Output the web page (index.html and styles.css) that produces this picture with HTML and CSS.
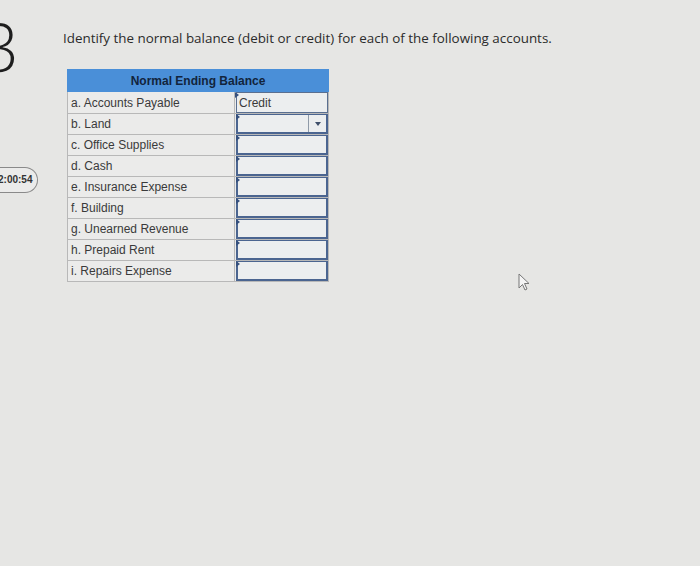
FILE: index.html
```html
<!DOCTYPE html>
<html>
<head>
<meta charset="utf-8">
<link rel="stylesheet" href="styles.css">
</head>
<body>
<div class="page">
  <aside class="side">
    <div class="qnum">3</div>
    <div class="timer">2:00:54</div>
  </aside>
  <main class="main">
    <p class="prompt">Identify the normal balance (debit or credit) for each of the following accounts.</p>
    <table class="grid">
      <thead>
        <tr><th colspan="2">Normal Ending Balance</th></tr>
      </thead>
      <tbody>
        <tr><td class="acct">a. Accounts Payable</td><td class="ans"><div class="box filled">Credit</div></td></tr>
        <tr><td class="acct">b. Land</td><td class="ans"><div class="box select"><span class="sel-val"></span><span class="arrow"></span></div></td></tr>
        <tr><td class="acct">c. Office Supplies</td><td class="ans"><div class="box"></div></td></tr>
        <tr><td class="acct">d. Cash</td><td class="ans"><div class="box"></div></td></tr>
        <tr><td class="acct">e. Insurance Expense</td><td class="ans"><div class="box"></div></td></tr>
        <tr><td class="acct">f. Building</td><td class="ans"><div class="box"></div></td></tr>
        <tr><td class="acct">g. Unearned Revenue</td><td class="ans"><div class="box"></div></td></tr>
        <tr><td class="acct">h. Prepaid Rent</td><td class="ans"><div class="box"></div></td></tr>
        <tr><td class="acct">i. Repairs Expense</td><td class="ans"><div class="box"></div></td></tr>
      </tbody>
    </table>
  </main>
  <svg class="cursor" width="14" height="20" viewBox="0 0 14 20"><path d="M1 1 L1 15 L4.5 11.5 L7 17 L9 16 L6.5 10.5 L11 10.5 Z" fill="#f4f4f4" stroke="#777" stroke-width="1"/></svg>
</div>
</body>
</html>
```

FILE: styles.css
```css
html, body {
  margin: 0;
  padding: 0;
}
body {
  background: #e6e6e4;
  width: 700px;
  height: 566px;
  overflow: hidden;
  font-family: "Liberation Sans", Arial, sans-serif;
  color: #333;
}
.page {
  position: relative;
  display: flex;
  height: 566px;
}
.side {
  width: 63px;
  flex: none;
  display: flex;
  flex-direction: column;
  align-items: flex-start;
}
.qnum {
  font-family: "Open Sans", sans-serif;
  font-size: 66px;
  line-height: 66px;
  color: #1e1e1e;
  margin-top: 13px;
  margin-left: -19px;
  font-weight: 300;
}
.timer {
  margin-top: 88px;
  margin-left: -12px;
  height: 26px;
  width: 50px;
  box-sizing: border-box;
  border: 1px solid #8a8a8a;
  border-left: none;
  border-radius: 0 13px 13px 0;
  font-size: 10px;
  font-weight: bold;
  line-height: 24px;
  color: #333;
  padding-left: 10px;
  background: #ebebea;
}
.main {
  flex: 1;
}
.prompt {
  margin: 30px 0 0 0;
  font-family: "Open Sans", sans-serif;
  font-size: 13.4px;
  line-height: 17px;
  color: #2b2b2b;
}
.grid {
  margin: 22px 0 0 4px;
  border-collapse: collapse;
  width: 262px;
  font-size: 12px;
}
.grid th {
  background: #4a8fd8;
  color: #12243c;
  font-weight: bold;
  height: 21px;
  padding: 0;
  font-size: 12px;
  border: 1px solid #4a8fd8;
  text-align: center;
  line-height: 20px;
}
.grid td {
  border: 1px solid #b8b8b8;
  height: 20px;
  padding: 0;
}
.acct {
  width: 163px;
  padding-left: 3px !important;
  color: #3a3a3a;
  background: #ebebea;
}
.ans {
  width: 93px;
  position: relative;
  background: #ebebea;
}
.box {
  height: 17px;
  margin: 0 0 0 1px;
  border: 2px solid #4b6590;
  border-top-width: 1px;
  border-bottom-width: 2px;
  box-sizing: content-box;
  display: flex;
  align-items: center;
  background: #eceeef;
  position: relative;
}
.box::before {
  content: "";
  position: absolute;
  left: -2px;
  top: -1px;
  border-left: 4px solid #35507e;
  border-top: 3px solid transparent;
  border-bottom: 3px solid transparent;
}
.filled {
  border-color: #5a6f90;
  border-width: 1px;
  height: 19px;
  padding-left: 2px;
  font-size: 12px;
  color: #3a3a3a;
}
.select .sel-val {
  flex: 1;
  height: 100%;
}
.select .arrow {
  width: 17px;
  height: 100%;
  border-left: 1px solid #8f9aa8;
  display: flex;
  align-items: center;
  justify-content: center;
}
.select .arrow::after {
  content: "";
  border-top: 4px solid #3f4f6a;
  border-left: 3.5px solid transparent;
  border-right: 3.5px solid transparent;
}
.cursor {
  position: absolute;
  left: 518px;
  top: 273px;
}
```
